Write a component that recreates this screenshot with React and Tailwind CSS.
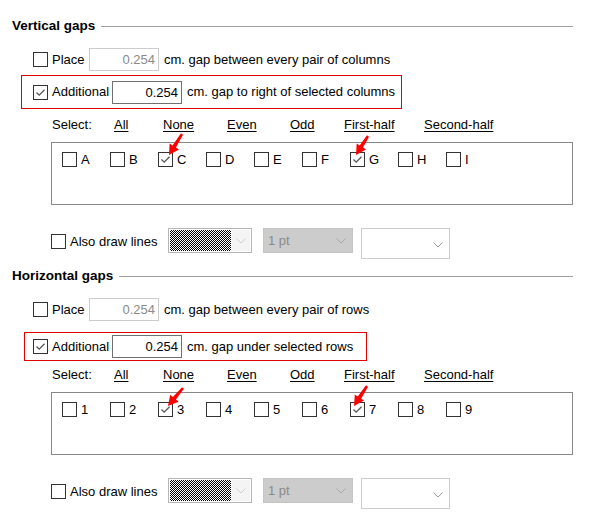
const FONT = "font-['Liberation_Sans',Arial,sans-serif]"

function Check({ checked }) {
  return (
    <span className="w-[15px] h-[15px] border border-[#333] bg-white flex items-center justify-center shrink-0">
      {checked && (
        <svg width="13" height="13" viewBox="0 0 13 13">
          <path d="M2.5 6.5 L5.2 9.2 L10.5 3.8" fill="none" stroke="#555" strokeWidth="1.3" />
        </svg>
      )}
    </span>
  )
}

function Chevron({ color = '#9a9a9a' }) {
  return (
    <svg width="10" height="6" viewBox="0 0 10 6">
      <path d="M0.5 0.5 L5 5 L9.5 0.5" fill="none" stroke={color} strokeWidth="1" />
    </svg>
  )
}

function Heading({ title, mt }) {
  return (
    <div className={`flex items-center h-[16px] pl-[12px] pr-[16px] ${mt}`}>
      <span className="font-bold text-[13.5px] text-black">{title}</span>
      <span className="flex-1 h-px bg-[#a0a0a0] ml-[6px]" />
    </div>
  )
}

function Select({ mt }) {
  const links = [
    ['All', 'w-[49px]'],
    ['None', 'w-[64px]'],
    ['Even', 'w-[63px]'],
    ['Odd', 'w-[54px]'],
    ['First-half', 'w-[80px]'],
    ['Second-half', ''],
  ]
  return (
    <div className={`flex items-center h-[16px] pl-[52px] ${mt}`}>
      <span className="w-[62px]">Select:</span>
      {links.map(([l, w]) => (
        <span key={l} className={w}><span className="underline underline-offset-2">{l}</span></span>
      ))}
    </div>
  )
}

function ListBox({ items, checked }) {
  return (
    <div className="ml-[51px] w-[522px] h-[63px] border border-[#888] mt-[9px] pt-[9px] pl-[10px] flex items-start">
      {items.map((it) => (
        <div key={it} className="w-[48px] flex items-center">
          <Check checked={checked.includes(it)} />
          <span className="ml-[4px] leading-[15px]">{it}</span>
        </div>
      ))}
    </div>
  )
}

function AlsoRow() {
  return (
    <div className="flex items-start pl-[51px] mt-[23px]">
      <div className="w-[117px] flex items-center mt-[4px]">
        <Check />
        <span className="ml-[4px]">Also draw lines</span>
      </div>
      <div className="w-[84px] h-[25px] border border-[#b5b5b5] p-[1px] flex bg-white">
        <div className="w-[61px] h-full bg-[repeating-conic-gradient(#000_0_25%,#fff_0_50%)] bg-[length:2px_2px]" />
        <div className="flex-1 h-full bg-[#f4f4f4] flex items-center justify-center">
          <Chevron color="#d0d0d0" />
        </div>
      </div>
      <div className="ml-[11px] w-[90px] h-[25px] bg-[#cccccc] border border-[#c4c4c4] flex items-center pl-[4px] pr-[6px] text-[#8a8a8a]">
        <span className="flex-1">1 pt</span>
        <Chevron color="#a8a8a8" />
      </div>
      <div className="ml-[8px] w-[89px] h-[31px] border border-[#cccccc] bg-white flex items-center justify-end pr-[6px] pt-[3px]">
        <Chevron color="#9a9a9a" />
      </div>
    </div>
  )
}

function Section({ title, headMt, placeMt, redMt, redCls, redPl, selMt, unit, addText, items, checked }) {
  return (
    <div>
      <Heading title={title} mt={headMt} />
      <div className={`flex items-center h-[23px] pl-[33px] ${placeMt}`}>
        <Check />
        <span className="ml-[4px] w-[37px]">Place</span>
        <div className="w-[70px] h-[23px] border border-[#cccccc] text-right pr-[3px] leading-[21px] text-[#8a8a8a]">0.254</div>
        <span className="ml-[5px]">cm. gap between every pair of {unit}</span>
      </div>
      <div className={`border border-[#e00000] flex items-center ${redCls} ${redMt} ${redPl}`}>
        <Check checked />
        <span className="ml-[4px] w-[60px]">Additional</span>
        <div className="w-[70px] h-[23px] border border-[#707070] text-right pr-[3px] leading-[21px] text-black">0.254</div>
        <span className="ml-[5px]">{addText}</span>
      </div>
      <Select mt={selMt} />
      <ListBox items={items} checked={checked} />
      <AlsoRow />
    </div>
  )
}

function arrowPts(x1, y1, x2, y2) {
  const dx = x2 - x1, dy = y2 - y1
  const len = Math.hypot(dx, dy)
  const ux = dx / len, uy = dy / len
  const px = -uy, py = ux
  const hl = 10, hw = 5.5, sw = 2
  const bx = x2 - ux * hl, by = y2 - uy * hl
  const p = [
    [x1 + px * sw * 0.6, y1 + py * sw * 0.6],
    [bx + px * sw, by + py * sw],
    [bx + px * hw, by + py * hw],
    [x2, y2],
    [bx - px * hw, by - py * hw],
    [bx - px * sw, by - py * sw],
    [x1 - px * sw * 0.6, y1 - py * sw * 0.6],
  ]
  return p.map((q) => q.join(',')).join(' ')
}

export default function App() {
  const arrows = [
    [182, 134, 169, 155],
    [368, 136, 356, 155],
    [183, 388, 168, 406],
    [367, 386, 354, 406],
  ]
  return (
    <div className={`relative w-[589px] h-[520px] bg-white overflow-hidden text-[13px] text-black ${FONT}`}>
      <Section
        title="Vertical gaps"
        headMt="mt-[18px]"
        placeMt="mt-[14px]"
        redMt="mt-[4px]"
        redCls="ml-[21px] w-[381px] h-[34px]"
        redPl="pl-[11px]"
        selMt="mt-[8px]"
        unit="columns"
        addText="cm. gap to right of selected columns"
        items={['A', 'B', 'C', 'D', 'E', 'F', 'G', 'H', 'I']}
        checked={['C', 'G']}
      />
      <Section
        title="Horizontal gaps"
        headMt="mt-[9px]"
        placeMt="mt-[14px]"
        redMt="mt-[11px]"
        redCls="ml-[24px] w-[343px] h-[29px]"
        redPl="pl-[8px]"
        selMt="mt-[6px]"
        unit="rows"
        addText="cm. gap under selected rows"
        items={['1', '2', '3', '4', '5', '6', '7', '8', '9']}
        checked={['3', '7']}
      />
      <svg className="absolute inset-0 pointer-events-none" width="589" height="520">
        {arrows.map((a, i) => (
          <polygon key={i} points={arrowPts(...a)} fill="#f00" />
        ))}
      </svg>
    </div>
  )
}
